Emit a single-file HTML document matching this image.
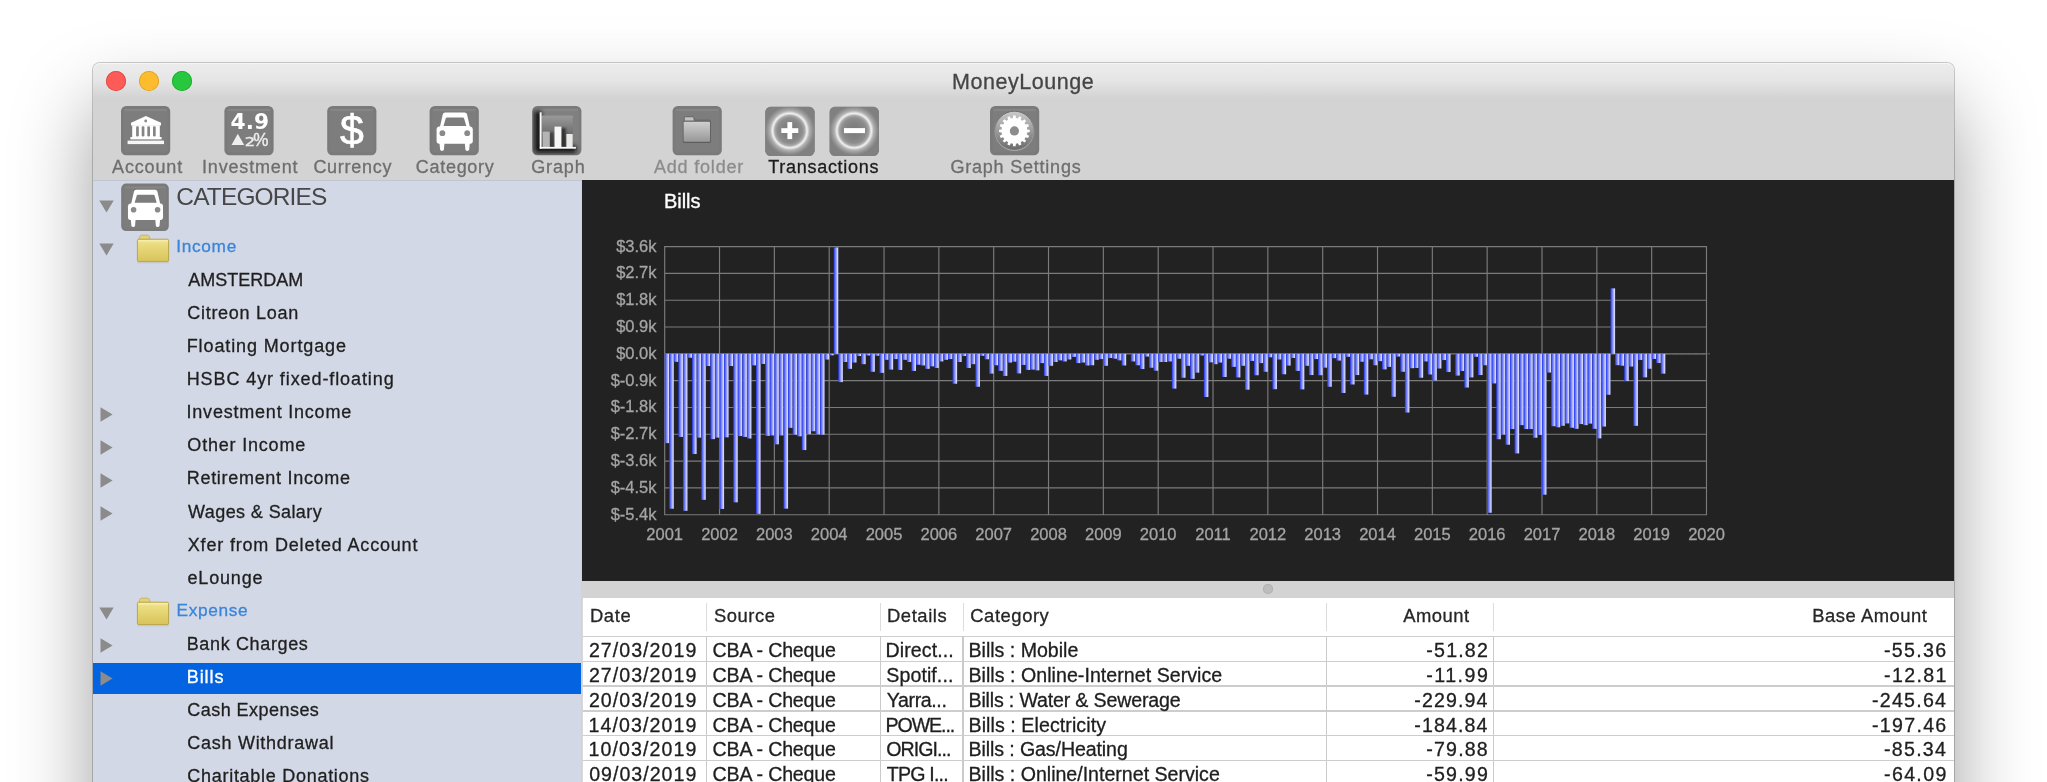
<!DOCTYPE html>
<html lang="en"><head><meta charset="utf-8"><title>MoneyLounge</title>
<style>
html,body{margin:0;padding:0;background:#fff;}
body{width:2047px;height:782px;overflow:hidden;position:relative;font-family:"Liberation Sans",sans-serif;}
.t{position:absolute;white-space:nowrap;-webkit-text-stroke:.3px currentColor;}
.abs{position:absolute;}
#root{position:absolute;left:0;top:0;width:2047px;height:782px;overflow:hidden;will-change:transform;}
#win{position:absolute;left:93px;top:63px;width:1861px;height:900px;border-radius:7px 7px 0 0;background:#d3d3d3;
 box-shadow:0 0 0 1px rgba(0,0,0,.2),0 42px 80px 0 rgba(0,0,0,.38);}
#titlebar{position:absolute;left:93px;top:63px;width:1861px;height:117px;border-radius:7px 7px 0 0;
 background:linear-gradient(#ececec 0,#e6e6e6 17px,#d3d3d3 35px,#d3d3d3 100%);box-shadow:inset 0 1px 0 #f6f6f6;}
#sidebar{position:absolute;left:93px;top:181px;width:488px;height:610px;background:#d2d8e5;}
#chart{position:absolute;left:582px;top:180px;width:1372px;height:400.7px;background:#222222;}
#split{position:absolute;left:581px;top:580.7px;width:1373px;height:17px;background:#d3d3d3;}
#table{position:absolute;left:583px;top:597.5px;width:1371px;height:200px;background:#fff;}
.ic{position:absolute;width:49px;height:49px;border-radius:6px;background:#7e7e7e;box-shadow:inset 0 0 0 2.5px #787878;}
</style></head><body><div id="root">

<div id="win"></div><div id="titlebar"></div>
<div class="abs" style="left:106px;top:71px;width:20px;height:20px;border-radius:50%;background:#fc5b57;box-shadow:inset 0 0 0 .8px #e0443e;"></div>
<div class="abs" style="left:139px;top:71px;width:20px;height:20px;border-radius:50%;background:#fdbc2e;box-shadow:inset 0 0 0 .8px #dea123;"></div>
<div class="abs" style="left:172px;top:71px;width:20px;height:20px;border-radius:50%;background:#27c840;box-shadow:inset 0 0 0 .8px #1aab29;"></div>
<div class="t" style="left:952.04px;top:69.35px;font-size:21.50px;line-height:26px;color:#454545;letter-spacing:0.544px;">MoneyLounge</div>
<svg class="abs" style="left:120px;top:105px" width="54" height="54" viewBox="0 0 54 54"><defs></defs><g transform="translate(1.00 1.00) scale(1.0000)"><rect x="0" y="0" width="49.2" height="49.2" rx="5.2" fill="#7a7a7a"/><rect x="2.6" y="2.6" width="44.0" height="44.0" rx="3" fill="#7d7d7d"/><rect x="3.2" y="3" width="42.8" height="2" rx="1" fill="#8a8a8a" opacity=".7"/><path d="M24.9 9.9L40 16.8V19.6H10V16.8Z" fill="#ffffff"/><circle cx="24.7" cy="15" r="1.45" fill="#8a8a8a"/><rect x="11.2" y="19.2" width="27.6" height="12" fill="#ffffff"/><rect x="15.1" y="20.3" width="2.7" height="10.2" rx="1.2" fill="#858585"/><rect x="20.7" y="20.3" width="2.7" height="10.2" rx="1.2" fill="#858585"/><rect x="26.3" y="20.3" width="2.7" height="10.2" rx="1.2" fill="#858585"/><rect x="32.0" y="20.3" width="2.7" height="10.2" rx="1.2" fill="#858585"/><rect x="9.4" y="31" width="31.2" height="2.4" fill="#ffffff"/><rect x="6.6" y="34.6" width="36.4" height="3.5" fill="#ffffff" opacity=".93"/></g></svg>
<svg class="abs" style="left:223px;top:105px" width="54" height="54" viewBox="0 0 54 54"><defs></defs><g transform="translate(1.40 1.00) scale(1.0000)"><rect x="0" y="0" width="49.2" height="49.2" rx="5.2" fill="#7a7a7a"/><rect x="2.6" y="2.6" width="44.0" height="44.0" rx="3" fill="#7d7d7d"/><rect x="3.2" y="3" width="42.8" height="2" rx="1" fill="#8a8a8a" opacity=".7"/><text x="25.4" y="22.9" font-family="'DejaVu Sans','Liberation Sans',sans-serif" font-weight="bold" font-size="21.5" text-anchor="middle" fill="#ffffff" textLength="38.5" lengthAdjust="spacingAndGlyphs">4.9</text><path d="M13.4 27.8L19.8 38.9H7.1Z" fill="#eeeeee"/><text x="20.3" y="39.7" font-family="'DejaVu Sans','Liberation Sans',sans-serif" font-size="11.5" fill="#ececec" stroke="#ececec" stroke-width=".4" textLength="10.4" lengthAdjust="spacingAndGlyphs">2</text><text x="28.8" y="39.9" font-family="'Liberation Sans',sans-serif" font-size="18" fill="#ececec" stroke="#ececec" stroke-width=".4" textLength="15.2" lengthAdjust="spacingAndGlyphs">%</text></g></svg>
<svg class="abs" style="left:326px;top:105px" width="54" height="54" viewBox="0 0 54 54"><defs></defs><g transform="translate(1.20 1.00) scale(1.0000)"><rect x="0" y="0" width="49.2" height="49.2" rx="5.2" fill="#7a7a7a"/><rect x="2.6" y="2.6" width="44.0" height="44.0" rx="3" fill="#7d7d7d"/><rect x="3.2" y="3" width="42.8" height="2" rx="1" fill="#8a8a8a" opacity=".7"/><text x="24.8" y="39.3" font-family="'Liberation Sans',sans-serif" font-size="42.8" text-anchor="middle" fill="#ffffff" stroke="#ffffff" stroke-width="0.7" stroke-linejoin="round">$</text></g></svg>
<svg class="abs" style="left:428px;top:105px" width="54" height="54" viewBox="0 0 54 54"><defs></defs><g transform="translate(1.60 1.00) scale(1.0000)"><rect x="0" y="0" width="49.2" height="49.2" rx="5.2" fill="#7a7a7a"/><rect x="2.6" y="2.6" width="44.0" height="44.0" rx="3" fill="#7d7d7d"/><rect x="3.2" y="3" width="42.8" height="2" rx="1" fill="#8a8a8a" opacity=".7"/><path fill-rule="evenodd" d="M15.6 6.4H35Q36.9 6.4 37.4 8.2L40.4 21.5H10.2L13.2 8.2Q13.7 6.4 15.6 6.4ZM17.3 11.5Q16.4 11.5 16.1 12.4L13.9 20H36.7L34.5 12.4Q34.2 11.5 33.3 11.5Z" fill="#ffffff"/><path d="M9.6 20.6H41Q43.2 20.9 43.2 23.6V35Q43.2 37.7 40.6 37.7H9.6Q7 37.7 7 35V23.6Q7 20.9 9.6 20.6Z" fill="#ffffff"/><path d="M9.9 37H14.9L14.3 43.6Q14 45 12.4 45Q10.8 45 10.5 43.6Z" fill="#ffffff"/><path d="M35.2 37H40.2L39.6 43.6Q39.3 45 37.7 45Q36.1 45 35.8 43.6Z" fill="#ffffff"/><circle cx="12.8" cy="27.2" r="2.9" fill="#8a8a8a"/><circle cx="37.6" cy="27.2" r="2.9" fill="#8a8a8a"/></g></svg>
<svg class="abs" style="left:531px;top:105px" width="54" height="54" viewBox="0 0 54 54"><defs><linearGradient id="gpl" x1="0" y1="0" x2="0" y2="1"><stop offset="0" stop-color="#9a9a9a"/><stop offset="1" stop-color="#4e4e4e"/></linearGradient><filter id="gbl" x="-50%" y="-50%" width="200%" height="200%"><feGaussianBlur stdDeviation="2.2"/></filter><filter id="gb2" x="-50%" y="-50%" width="200%" height="200%"><feGaussianBlur stdDeviation="1.1"/></filter><clipPath id="gcl"><rect x="0" y="0" width="49.2" height="49.2" rx="5.2"/></clipPath></defs><g transform="translate(1.20 1.00) scale(1.0000)"><rect x="0" y="0" width="49.2" height="49.2" rx="5.2" fill="#7a7a7a"/><rect x="2.6" y="2.6" width="44.0" height="44.0" rx="3" fill="#808080"/><rect x="3.2" y="3" width="42.8" height="2" rx="1" fill="#8a8a8a" opacity=".7"/><g clip-path="url(#gcl)"><path d="M2.5 5V46.5H44V40H9V5Z" fill="#0c0c0c" filter="url(#gbl)"/><rect x="9.2" y="9.6" width="31.5" height="31.6" fill="url(#gpl)"/><rect x="17" y="26.5" width="4.5" height="14.5" fill="#333" filter="url(#gb2)" opacity=".8"/><rect x="28.6" y="22" width="5" height="19" fill="#2c2c2c" filter="url(#gb2)" opacity=".85"/><rect x="10.4" y="25.6" width="7.2" height="15.4" fill="#b4b4b4"/><rect x="22.3" y="20.6" width="6.9" height="20.4" fill="#f6f6f6"/><rect x="34.2" y="28" width="6.3" height="13" fill="#e9e9e6"/><rect x="7.5" y="6.3" width="1.9" height="36.4" fill="#fbfbfb"/><rect x="7.5" y="40.9" width="36.2" height="1.8" fill="#fbfbfb"/></g></g></svg>
<svg class="abs" style="left:671px;top:105px" width="54" height="54" viewBox="0 0 54 54"><defs><linearGradient id="fg" x1="0" y1="0" x2="0" y2="1"><stop offset="0" stop-color="#cfcfcf"/><stop offset="1" stop-color="#979797"/></linearGradient></defs><g transform="translate(1.60 1.00) scale(1.0000)"><rect x="0" y="0" width="49.2" height="49.2" rx="5.2" fill="#7a7a7a"/><rect x="2.6" y="2.6" width="44.0" height="44.0" rx="3" fill="#7d7d7d"/><rect x="3.2" y="3" width="42.8" height="2" rx="1" fill="#8a8a8a" opacity=".7"/><path d="M11 12.3Q11 10.2 13 10.2H20Q21.6 10.2 22 11.8L22.4 13.4H36.6Q38.2 13.4 38.2 15V17H11Z" fill="#6a6a6a"/><path d="M12.2 11.2H20.6L21.2 14.5H12.2Z" fill="#c2c2c2"/><rect x="10.2" y="15.2" width="28" height="21.8" rx="1.2" fill="#5e5e5e"/><rect x="11" y="15.8" width="26.4" height="20" rx=".8" fill="url(#fg)"/></g></svg>
<svg class="abs" style="left:764px;top:105px" width="54" height="54" viewBox="0 0 54 54"><defs><radialGradient id="pmg" gradientUnits="userSpaceOnUse" cx="24.5" cy="23.9" r="25"><stop offset="0" stop-color="#7b7b7b"/><stop offset="0.3" stop-color="#828282"/><stop offset="0.5" stop-color="#8e8e8e"/><stop offset="0.6" stop-color="#a8a8a8"/><stop offset="0.66" stop-color="#dcdcdc"/><stop offset="0.69" stop-color="#f2f2f2"/><stop offset="0.72" stop-color="#dcdcdc"/><stop offset="0.79" stop-color="#b0b0b0"/><stop offset="0.92" stop-color="#8e8e8e"/><stop offset="1" stop-color="#808080"/></radialGradient><clipPath id="pcl"><path d="M4.4 0H44.8L49.2 4.4V44.8L44.8 49.2H4.4L0 44.8V4.4Z"/></clipPath></defs><g transform="translate(1.30 1.70) scale(1.0000)"><rect x="0" y="0" width="49.2" height="49.2" rx="5.2" fill="#7a7a7a"/><rect x="2.6" y="2.6" width="44.0" height="44.0" rx="3" fill="#7d7d7d"/><rect x="3.2" y="3" width="42.8" height="2" rx="1" fill="#8a8a8a" opacity=".7"/><g clip-path="url(#pcl)"><rect x="0" y="0" width="49.2" height="49.2" fill="#7c7c7c"/><circle cx="24.5" cy="23.9" r="34" fill="url(#pmg)"/></g><rect x="16" y="21.5" width="17" height="4.8" fill="#fff"/><rect x="22.1" y="15.4" width="4.8" height="17" fill="#fff"/></g></svg>
<svg class="abs" style="left:828px;top:105px" width="54" height="54" viewBox="0 0 54 54"><defs><radialGradient id="pmg2" gradientUnits="userSpaceOnUse" cx="24.5" cy="23.9" r="25"><stop offset="0" stop-color="#7b7b7b"/><stop offset="0.3" stop-color="#828282"/><stop offset="0.5" stop-color="#8e8e8e"/><stop offset="0.6" stop-color="#a8a8a8"/><stop offset="0.66" stop-color="#dcdcdc"/><stop offset="0.69" stop-color="#f2f2f2"/><stop offset="0.72" stop-color="#dcdcdc"/><stop offset="0.79" stop-color="#b0b0b0"/><stop offset="0.92" stop-color="#8e8e8e"/><stop offset="1" stop-color="#808080"/></radialGradient><clipPath id="pcl2"><path d="M4.4 0H44.8L49.2 4.4V44.8L44.8 49.2H4.4L0 44.8V4.4Z"/></clipPath></defs><g transform="translate(1.60 1.70) scale(1.0000)"><rect x="0" y="0" width="49.2" height="49.2" rx="5.2" fill="#7a7a7a"/><rect x="2.6" y="2.6" width="44.0" height="44.0" rx="3" fill="#7d7d7d"/><rect x="3.2" y="3" width="42.8" height="2" rx="1" fill="#8a8a8a" opacity=".7"/><g clip-path="url(#pcl2)"><rect x="0" y="0" width="49.2" height="49.2" fill="#7c7c7c"/><circle cx="24.5" cy="23.9" r="34" fill="url(#pmg2)"/></g><rect x="14.4" y="21.4" width="21" height="5" fill="#fff"/></g></svg>
<svg class="abs" style="left:989px;top:105px" width="54" height="54" viewBox="0 0 54 54"><defs><linearGradient id="grg" x1="0" y1="0" x2="0" y2="1"><stop offset="0" stop-color="#cacaca"/><stop offset="0.45" stop-color="#a0a0a0"/><stop offset="1" stop-color="#6a6a6a"/></linearGradient><linearGradient id="grr" x1="0" y1="0" x2="0" y2="1"><stop offset="0" stop-color="#666"/><stop offset="1" stop-color="#b8b8b8"/></linearGradient><filter id="grb" x="-20%" y="-20%" width="140%" height="140%"><feGaussianBlur stdDeviation=".65"/></filter></defs><g transform="translate(1.00 1.00) scale(1.0000)"><rect x="0" y="0" width="49.2" height="49.2" rx="5.2" fill="#7a7a7a"/><rect x="2.6" y="2.6" width="44.0" height="44.0" rx="3" fill="#7d7d7d"/><rect x="3.2" y="3" width="42.8" height="2" rx="1" fill="#8a8a8a" opacity=".7"/><circle cx="24.4" cy="24.8" r="19.6" fill="url(#grg)" stroke="url(#grr)" stroke-width="0.9"/><path d="M23.19 9.55L25.61 9.55L25.92 12.09L27.90 12.48L29.16 10.25L31.39 11.18L30.70 13.64L32.39 14.77L34.40 13.19L36.11 14.90L34.53 16.91L35.66 18.60L38.12 17.91L39.05 20.14L36.82 21.40L37.21 23.38L39.75 23.69L39.75 26.11L37.21 26.42L36.82 28.40L39.05 29.66L38.12 31.89L35.66 31.20L34.53 32.89L36.11 34.90L34.40 36.61L32.39 35.03L30.70 36.16L31.39 38.62L29.16 39.55L27.90 37.32L25.92 37.71L25.61 40.25L23.19 40.25L22.88 37.71L20.90 37.32L19.64 39.55L17.41 38.62L18.10 36.16L16.41 35.03L14.40 36.61L12.69 34.90L14.27 32.89L13.14 31.20L10.68 31.89L9.75 29.66L11.98 28.40L11.59 26.42L9.05 26.11L9.05 23.69L11.59 23.38L11.98 21.40L9.75 20.14L10.68 17.91L13.14 18.60L14.27 16.91L12.69 14.90L14.40 13.19L16.41 14.77L18.10 13.64L17.41 11.18L19.64 10.25L20.90 12.48L22.88 12.09Z" fill="#fff" filter="url(#grb)"/><circle cx="24.4" cy="24.9" r="4.6" fill="#8c8c8c"/></g></svg>
<div class="t" style="left:112.06px;top:155.96px;font-size:18.00px;line-height:22px;color:#6e6e6e;letter-spacing:0.854px;">Account</div>
<div class="t" style="left:202.04px;top:155.96px;font-size:18.00px;line-height:22px;color:#6e6e6e;letter-spacing:0.828px;">Investment</div>
<div class="t" style="left:313.39px;top:155.96px;font-size:18.00px;line-height:22px;color:#6e6e6e;letter-spacing:0.732px;">Currency</div>
<div class="t" style="left:415.69px;top:155.96px;font-size:18.00px;line-height:22px;color:#6e6e6e;letter-spacing:0.730px;">Category</div>
<div class="t" style="left:531.29px;top:155.96px;font-size:18.00px;line-height:22px;color:#6e6e6e;letter-spacing:0.836px;">Graph</div>
<div class="t" style="left:653.96px;top:155.96px;font-size:18.00px;line-height:22px;color:#8c8c8c;letter-spacing:0.808px;">Add folder</div>
<div class="t" style="left:768.20px;top:156.46px;font-size:18.00px;line-height:22px;color:#1c1c1c;letter-spacing:0.725px;">Transactions</div>
<div class="t" style="left:950.39px;top:156.46px;font-size:18.00px;line-height:22px;color:#6e6e6e;letter-spacing:0.791px;">Graph Settings</div>
<div id="sidebar"></div>
<div class="abs" style="left:93px;top:180px;width:489px;height:1px;background:#c0c5d1;"></div>
<div class="abs" style="left:93px;top:662.6px;width:488px;height:31.1px;background:#0463e1;"></div>
<svg class="abs" style="left:98.5px;top:200.0px" width="15" height="13" viewBox="0 0 15 13"><path d="M0.3 0.5H14.7L7.5 12.6Z" fill="#8b8b8b"/></svg>
<svg class="abs" style="left:98.5px;top:242.7px" width="15" height="13" viewBox="0 0 15 13"><path d="M0.3 0.5H14.7L7.5 12.6Z" fill="#8b8b8b"/></svg>
<svg class="abs" style="left:98.5px;top:606.5px" width="15" height="13" viewBox="0 0 15 13"><path d="M0.3 0.5H14.7L7.5 12.6Z" fill="#8b8b8b"/></svg>
<svg class="abs" style="left:99.7px;top:406.5px" width="13" height="15" viewBox="0 0 13 15"><path d="M0.5 0.3V14.7L12.6 7.5Z" fill="#8b8b8b"/></svg>
<svg class="abs" style="left:99.7px;top:439.6px" width="13" height="15" viewBox="0 0 13 15"><path d="M0.5 0.3V14.7L12.6 7.5Z" fill="#8b8b8b"/></svg>
<svg class="abs" style="left:99.7px;top:472.7px" width="13" height="15" viewBox="0 0 13 15"><path d="M0.5 0.3V14.7L12.6 7.5Z" fill="#8b8b8b"/></svg>
<svg class="abs" style="left:99.7px;top:505.7px" width="13" height="15" viewBox="0 0 13 15"><path d="M0.5 0.3V14.7L12.6 7.5Z" fill="#8b8b8b"/></svg>
<svg class="abs" style="left:99.7px;top:638.0px" width="13" height="15" viewBox="0 0 13 15"><path d="M0.5 0.3V14.7L12.6 7.5Z" fill="#8b8b8b"/></svg>
<svg class="abs" style="left:99.7px;top:671.0px" width="13" height="15" viewBox="0 0 13 15"><path d="M0.5 0.3V14.7L12.6 7.5Z" fill="#8c8c8c"/></svg>
<svg class="abs" style="left:120px;top:182px" width="52" height="52" viewBox="0 0 52 52"><defs></defs><g transform="translate(1.20 1.50) scale(0.9675)"><rect x="0" y="0" width="49.2" height="49.2" rx="5.2" fill="#7a7a7a"/><rect x="2.6" y="2.6" width="44.0" height="44.0" rx="3" fill="#7d7d7d"/><rect x="3.2" y="3" width="42.8" height="2" rx="1" fill="#8a8a8a" opacity=".7"/><path fill-rule="evenodd" d="M15.6 6.4H35Q36.9 6.4 37.4 8.2L40.4 21.5H10.2L13.2 8.2Q13.7 6.4 15.6 6.4ZM17.3 11.5Q16.4 11.5 16.1 12.4L13.9 20H36.7L34.5 12.4Q34.2 11.5 33.3 11.5Z" fill="#ffffff"/><path d="M9.6 20.6H41Q43.2 20.9 43.2 23.6V35Q43.2 37.7 40.6 37.7H9.6Q7 37.7 7 35V23.6Q7 20.9 9.6 20.6Z" fill="#ffffff"/><path d="M9.9 37H14.9L14.3 43.6Q14 45 12.4 45Q10.8 45 10.5 43.6Z" fill="#ffffff"/><path d="M35.2 37H40.2L39.6 43.6Q39.3 45 37.7 45Q36.1 45 35.8 43.6Z" fill="#ffffff"/><circle cx="12.8" cy="27.2" r="2.9" fill="#8a8a8a"/><circle cx="37.6" cy="27.2" r="2.9" fill="#8a8a8a"/></g></svg>
<svg class="abs" style="left:136.2px;top:234.4px" width="34" height="30" viewBox="0 0 34 30"><defs><linearGradient id="yf234" x1="0" y1="0" x2="0" y2="1"><stop offset="0" stop-color="#f3e694"/><stop offset="0.25" stop-color="#eadb7e"/><stop offset="1" stop-color="#d7c35a"/></linearGradient></defs><rect x="1.2" y="27.4" width="31.8" height="2" fill="#c6c9d2" opacity=".8"/><path d="M3.2 5.6Q3.2 1.2 5.6 1.2H11.6Q13.8 1.2 13.8 5.6Z" fill="#e3d27a" stroke="#bfab4e" stroke-width=".8"/><rect x="1.4" y="5.2" width="31.2" height="22.4" rx="1.4" fill="url(#yf234)" stroke="#b9a548" stroke-width="1"/><rect x="2.4" y="6.2" width="29.2" height="1.3" fill="#f8efb4" opacity=".9"/></svg>
<svg class="abs" style="left:136.2px;top:597.4px" width="34" height="30" viewBox="0 0 34 30"><defs><linearGradient id="yf597" x1="0" y1="0" x2="0" y2="1"><stop offset="0" stop-color="#f3e694"/><stop offset="0.25" stop-color="#eadb7e"/><stop offset="1" stop-color="#d7c35a"/></linearGradient></defs><rect x="1.2" y="27.4" width="31.8" height="2" fill="#c6c9d2" opacity=".8"/><path d="M3.2 5.6Q3.2 1.2 5.6 1.2H11.6Q13.8 1.2 13.8 5.6Z" fill="#e3d27a" stroke="#bfab4e" stroke-width=".8"/><rect x="1.4" y="5.2" width="31.2" height="22.4" rx="1.4" fill="url(#yf597)" stroke="#b9a548" stroke-width="1"/><rect x="2.4" y="6.2" width="29.2" height="1.3" fill="#f8efb4" opacity=".9"/></svg>
<div class="t" style="left:176.36px;top:181.91px;font-size:24.50px;line-height:29px;color:#474747;letter-spacing:-0.873px;-webkit-text-stroke:0;">CATEGORIES</div>
<div class="t" style="left:176.30px;top:236.30px;font-size:17.30px;line-height:21px;color:#3a85da;letter-spacing:0.666px;">Income</div>
<div class="t" style="left:176.58px;top:600.10px;font-size:17.30px;line-height:21px;color:#3a85da;letter-spacing:0.627px;">Expense</div>
<div class="t" style="left:188.16px;top:269.06px;font-size:18.00px;line-height:22px;color:#1f1f1f;letter-spacing:0.013px;">AMSTERDAM</div>
<div class="t" style="left:187.29px;top:302.13px;font-size:18.00px;line-height:22px;color:#1f1f1f;letter-spacing:0.710px;">Citreon Loan</div>
<div class="t" style="left:186.72px;top:335.20px;font-size:18.00px;line-height:22px;color:#1f1f1f;letter-spacing:0.887px;">Floating Mortgage</div>
<div class="t" style="left:186.72px;top:368.27px;font-size:18.00px;line-height:22px;color:#1f1f1f;letter-spacing:0.903px;">HSBC 4yr fixed-floating</div>
<div class="t" style="left:186.54px;top:401.34px;font-size:18.00px;line-height:22px;color:#1f1f1f;letter-spacing:0.787px;">Investment Income</div>
<div class="t" style="left:187.35px;top:434.41px;font-size:18.00px;line-height:22px;color:#1f1f1f;letter-spacing:0.800px;">Other Income</div>
<div class="t" style="left:186.72px;top:467.48px;font-size:18.00px;line-height:22px;color:#1f1f1f;letter-spacing:0.701px;">Retirement Income</div>
<div class="t" style="left:188.12px;top:500.55px;font-size:18.00px;line-height:22px;color:#1f1f1f;letter-spacing:0.395px;">Wages &amp; Salary</div>
<div class="t" style="left:187.80px;top:533.62px;font-size:18.00px;line-height:22px;color:#1f1f1f;letter-spacing:0.814px;">Xfer from Deleted Account</div>
<div class="t" style="left:187.44px;top:566.69px;font-size:18.00px;line-height:22px;color:#1f1f1f;letter-spacing:0.848px;">eLounge</div>
<div class="t" style="left:186.72px;top:632.83px;font-size:18.00px;line-height:22px;color:#1f1f1f;letter-spacing:0.642px;">Bank Charges</div>
<div class="t" style="left:186.72px;top:665.90px;font-size:18.00px;line-height:22px;color:#fff;letter-spacing:0.931px;-webkit-text-stroke:.35px #fff;">Bills</div>
<div class="t" style="left:187.29px;top:698.97px;font-size:18.00px;line-height:22px;color:#1f1f1f;letter-spacing:0.458px;">Cash Expenses</div>
<div class="t" style="left:187.29px;top:732.04px;font-size:18.00px;line-height:22px;color:#1f1f1f;letter-spacing:0.726px;">Cash Withdrawal</div>
<div class="t" style="left:187.29px;top:765.11px;font-size:18.00px;line-height:22px;color:#1f1f1f;letter-spacing:0.719px;">Charitable Donations</div>
<div id="chart"></div>
<svg class="abs" style="left:582px;top:180px" width="1372" height="401" viewBox="582 180 1372 401" font-family="'Liberation Sans',sans-serif">
<defs><linearGradient id="bg" x1="0" y1="0" x2="1" y2="0"><stop offset="0" stop-color="#2a3df2"/><stop offset="0.12" stop-color="#3a4cf6"/><stop offset="0.85" stop-color="#d6d9ff"/><stop offset="1" stop-color="#b9bce8"/></linearGradient></defs>
<text x="663.9" y="208.3" font-size="20" fill="#fff" stroke="#fff" stroke-width="0.35" textLength="36.6">Bills</text>
<path d="M664.70 246.10V515.20M719.53 246.10V515.20M774.36 246.10V515.20M829.19 246.10V515.20M884.03 246.10V515.20M938.86 246.10V515.20M993.69 246.10V515.20M1048.52 246.10V515.20M1103.35 246.10V515.20M1158.18 246.10V515.20M1213.02 246.10V515.20M1267.85 246.10V515.20M1322.68 246.10V515.20M1377.51 246.10V515.20M1432.34 246.10V515.20M1487.17 246.10V515.20M1542.01 246.10V515.20M1596.84 246.10V515.20M1651.67 246.10V515.20M1706.50 246.10V515.20M664.20 246.60H1707.00M664.20 273.41H1707.00M664.20 300.22H1707.00M664.20 327.03H1707.00M664.20 353.84H1707.00M664.20 380.65H1707.00M664.20 407.46H1707.00M664.20 434.27H1707.00M664.20 461.08H1707.00M664.20 487.89H1707.00M664.20 514.70H1707.00" stroke="#7b7b7b" stroke-width="1.15" fill="none"/>
<path d="M1665.4 353.84H1710" stroke="#666" stroke-width="1" stroke-dasharray="5 2" fill="none"/>
<rect x="664.70" y="353.84" width="4.57" height="89.30" fill="url(#bg)"/>
<rect x="669.27" y="353.84" width="4.57" height="154.90" fill="url(#bg)"/>
<rect x="673.84" y="353.84" width="4.57" height="8.00" fill="url(#bg)"/>
<rect x="678.41" y="353.84" width="4.57" height="83.10" fill="url(#bg)"/>
<rect x="682.98" y="353.84" width="4.57" height="157.00" fill="url(#bg)"/>
<rect x="687.55" y="353.84" width="4.57" height="3.90" fill="url(#bg)"/>
<rect x="692.12" y="353.84" width="4.57" height="100.20" fill="url(#bg)"/>
<rect x="696.69" y="353.84" width="4.57" height="83.80" fill="url(#bg)"/>
<rect x="701.25" y="353.84" width="4.57" height="146.00" fill="url(#bg)"/>
<rect x="705.82" y="353.84" width="4.57" height="12.20" fill="url(#bg)"/>
<rect x="710.39" y="353.84" width="4.57" height="85.30" fill="url(#bg)"/>
<rect x="714.96" y="353.84" width="4.57" height="83.80" fill="url(#bg)"/>
<rect x="719.53" y="353.84" width="4.57" height="155.10" fill="url(#bg)"/>
<rect x="724.10" y="353.84" width="4.57" height="83.50" fill="url(#bg)"/>
<rect x="728.67" y="353.84" width="4.57" height="12.20" fill="url(#bg)"/>
<rect x="733.24" y="353.84" width="4.57" height="148.50" fill="url(#bg)"/>
<rect x="737.81" y="353.84" width="4.57" height="82.20" fill="url(#bg)"/>
<rect x="742.38" y="353.84" width="4.57" height="83.10" fill="url(#bg)"/>
<rect x="746.95" y="353.84" width="4.57" height="84.70" fill="url(#bg)"/>
<rect x="751.52" y="353.84" width="4.57" height="11.50" fill="url(#bg)"/>
<rect x="756.09" y="353.84" width="4.57" height="160.00" fill="url(#bg)"/>
<rect x="760.66" y="353.84" width="4.57" height="10.10" fill="url(#bg)"/>
<rect x="765.22" y="353.84" width="4.57" height="82.00" fill="url(#bg)"/>
<rect x="769.79" y="353.84" width="4.57" height="81.60" fill="url(#bg)"/>
<rect x="774.36" y="353.84" width="4.57" height="90.50" fill="url(#bg)"/>
<rect x="778.93" y="353.84" width="4.57" height="81.60" fill="url(#bg)"/>
<rect x="783.50" y="353.84" width="4.57" height="154.80" fill="url(#bg)"/>
<rect x="788.07" y="353.84" width="4.57" height="74.00" fill="url(#bg)"/>
<rect x="792.64" y="353.84" width="4.57" height="80.80" fill="url(#bg)"/>
<rect x="797.21" y="353.84" width="4.57" height="82.50" fill="url(#bg)"/>
<rect x="801.78" y="353.84" width="4.57" height="96.20" fill="url(#bg)"/>
<rect x="806.35" y="353.84" width="4.57" height="80.20" fill="url(#bg)"/>
<rect x="810.92" y="353.84" width="4.57" height="77.40" fill="url(#bg)"/>
<rect x="815.49" y="353.84" width="4.57" height="80.40" fill="url(#bg)"/>
<rect x="820.06" y="353.84" width="4.57" height="80.80" fill="url(#bg)"/>
<rect x="824.63" y="353.84" width="4.57" height="5.70" fill="url(#bg)"/>
<rect x="829.19" y="353.84" width="4.57" height="1.50" fill="url(#bg)"/>
<rect x="833.76" y="247.44" width="4.57" height="106.40" fill="url(#bg)"/>
<rect x="838.33" y="353.84" width="4.57" height="28.26" fill="url(#bg)"/>
<rect x="842.90" y="353.84" width="4.57" height="8.15" fill="url(#bg)"/>
<rect x="847.47" y="353.84" width="4.57" height="15.00" fill="url(#bg)"/>
<rect x="852.04" y="353.84" width="4.57" height="8.70" fill="url(#bg)"/>
<rect x="856.61" y="353.84" width="4.57" height="2.17" fill="url(#bg)"/>
<rect x="861.18" y="353.84" width="4.57" height="10.33" fill="url(#bg)"/>
<rect x="865.75" y="353.84" width="4.57" height="1.63" fill="url(#bg)"/>
<rect x="870.32" y="353.84" width="4.57" height="17.93" fill="url(#bg)"/>
<rect x="874.89" y="353.84" width="4.57" height="1.85" fill="url(#bg)"/>
<rect x="879.46" y="353.84" width="4.57" height="19.02" fill="url(#bg)"/>
<rect x="884.03" y="353.84" width="4.57" height="5.98" fill="url(#bg)"/>
<rect x="888.60" y="353.84" width="4.57" height="15.76" fill="url(#bg)"/>
<rect x="893.16" y="353.84" width="4.57" height="5.22" fill="url(#bg)"/>
<rect x="897.73" y="353.84" width="4.57" height="16.09" fill="url(#bg)"/>
<rect x="902.30" y="353.84" width="4.57" height="5.98" fill="url(#bg)"/>
<rect x="906.87" y="353.84" width="4.57" height="8.15" fill="url(#bg)"/>
<rect x="911.44" y="353.84" width="4.57" height="17.07" fill="url(#bg)"/>
<rect x="916.01" y="353.84" width="4.57" height="10.87" fill="url(#bg)"/>
<rect x="920.58" y="353.84" width="4.57" height="11.63" fill="url(#bg)"/>
<rect x="925.15" y="353.84" width="4.57" height="15.00" fill="url(#bg)"/>
<rect x="929.72" y="353.84" width="4.57" height="12.50" fill="url(#bg)"/>
<rect x="934.29" y="353.84" width="4.57" height="14.13" fill="url(#bg)"/>
<rect x="938.86" y="353.84" width="4.57" height="7.61" fill="url(#bg)"/>
<rect x="943.43" y="353.84" width="4.57" height="5.98" fill="url(#bg)"/>
<rect x="948.00" y="353.84" width="4.57" height="5.22" fill="url(#bg)"/>
<rect x="952.57" y="353.84" width="4.57" height="29.89" fill="url(#bg)"/>
<rect x="957.14" y="353.84" width="4.57" height="8.15" fill="url(#bg)"/>
<rect x="961.70" y="353.84" width="4.57" height="2.17" fill="url(#bg)"/>
<rect x="966.27" y="353.84" width="4.57" height="14.13" fill="url(#bg)"/>
<rect x="970.84" y="353.84" width="4.57" height="10.33" fill="url(#bg)"/>
<rect x="975.41" y="353.84" width="4.57" height="32.93" fill="url(#bg)"/>
<rect x="979.98" y="353.84" width="4.57" height="1.96" fill="url(#bg)"/>
<rect x="984.55" y="353.84" width="4.57" height="5.43" fill="url(#bg)"/>
<rect x="989.12" y="353.84" width="4.57" height="19.78" fill="url(#bg)"/>
<rect x="993.69" y="353.84" width="4.57" height="11.41" fill="url(#bg)"/>
<rect x="998.26" y="353.84" width="4.57" height="17.07" fill="url(#bg)"/>
<rect x="1002.83" y="353.84" width="4.57" height="22.07" fill="url(#bg)"/>
<rect x="1007.40" y="353.84" width="4.57" height="8.70" fill="url(#bg)"/>
<rect x="1011.97" y="353.84" width="4.57" height="7.83" fill="url(#bg)"/>
<rect x="1016.54" y="353.84" width="4.57" height="19.57" fill="url(#bg)"/>
<rect x="1021.11" y="353.84" width="4.57" height="11.09" fill="url(#bg)"/>
<rect x="1025.67" y="353.84" width="4.57" height="16.09" fill="url(#bg)"/>
<rect x="1030.24" y="353.84" width="4.57" height="15.76" fill="url(#bg)"/>
<rect x="1034.81" y="353.84" width="4.57" height="16.52" fill="url(#bg)"/>
<rect x="1039.38" y="353.84" width="4.57" height="9.24" fill="url(#bg)"/>
<rect x="1043.95" y="353.84" width="4.57" height="22.07" fill="url(#bg)"/>
<rect x="1048.52" y="353.84" width="4.57" height="11.96" fill="url(#bg)"/>
<rect x="1053.09" y="353.84" width="4.57" height="8.15" fill="url(#bg)"/>
<rect x="1057.66" y="353.84" width="4.57" height="6.52" fill="url(#bg)"/>
<rect x="1062.23" y="353.84" width="4.57" height="7.61" fill="url(#bg)"/>
<rect x="1066.80" y="353.84" width="4.57" height="5.65" fill="url(#bg)"/>
<rect x="1071.37" y="353.84" width="4.57" height="3.04" fill="url(#bg)"/>
<rect x="1075.94" y="353.84" width="4.57" height="9.24" fill="url(#bg)"/>
<rect x="1080.51" y="353.84" width="4.57" height="8.70" fill="url(#bg)"/>
<rect x="1085.08" y="353.84" width="4.57" height="11.63" fill="url(#bg)"/>
<rect x="1089.64" y="353.84" width="4.57" height="11.41" fill="url(#bg)"/>
<rect x="1094.21" y="353.84" width="4.57" height="5.98" fill="url(#bg)"/>
<rect x="1098.78" y="353.84" width="4.57" height="5.22" fill="url(#bg)"/>
<rect x="1103.35" y="353.84" width="4.57" height="11.96" fill="url(#bg)"/>
<rect x="1107.92" y="353.84" width="4.57" height="4.13" fill="url(#bg)"/>
<rect x="1112.49" y="353.84" width="4.57" height="4.89" fill="url(#bg)"/>
<rect x="1117.06" y="353.84" width="4.57" height="6.52" fill="url(#bg)"/>
<rect x="1121.63" y="353.84" width="4.57" height="11.63" fill="url(#bg)"/>
<rect x="1130.77" y="353.84" width="4.57" height="7.61" fill="url(#bg)"/>
<rect x="1135.34" y="353.84" width="4.57" height="11.41" fill="url(#bg)"/>
<rect x="1139.91" y="353.84" width="4.57" height="15.22" fill="url(#bg)"/>
<rect x="1144.48" y="353.84" width="4.57" height="2.72" fill="url(#bg)"/>
<rect x="1149.05" y="353.84" width="4.57" height="13.91" fill="url(#bg)"/>
<rect x="1153.61" y="353.84" width="4.57" height="16.85" fill="url(#bg)"/>
<rect x="1158.18" y="353.84" width="4.57" height="8.15" fill="url(#bg)"/>
<rect x="1162.75" y="353.84" width="4.57" height="8.15" fill="url(#bg)"/>
<rect x="1167.32" y="353.84" width="4.57" height="7.61" fill="url(#bg)"/>
<rect x="1171.89" y="353.84" width="4.57" height="34.78" fill="url(#bg)"/>
<rect x="1176.46" y="353.84" width="4.57" height="4.89" fill="url(#bg)"/>
<rect x="1181.03" y="353.84" width="4.57" height="23.91" fill="url(#bg)"/>
<rect x="1185.60" y="353.84" width="4.57" height="11.96" fill="url(#bg)"/>
<rect x="1190.17" y="353.84" width="4.57" height="25.00" fill="url(#bg)"/>
<rect x="1194.74" y="353.84" width="4.57" height="18.80" fill="url(#bg)"/>
<rect x="1199.31" y="353.84" width="4.57" height="1.63" fill="url(#bg)"/>
<rect x="1203.88" y="353.84" width="4.57" height="43.15" fill="url(#bg)"/>
<rect x="1208.45" y="353.84" width="4.57" height="8.48" fill="url(#bg)"/>
<rect x="1213.02" y="353.84" width="4.57" height="10.33" fill="url(#bg)"/>
<rect x="1217.59" y="353.84" width="4.57" height="8.70" fill="url(#bg)"/>
<rect x="1222.15" y="353.84" width="4.57" height="23.15" fill="url(#bg)"/>
<rect x="1226.72" y="353.84" width="4.57" height="4.89" fill="url(#bg)"/>
<rect x="1231.29" y="353.84" width="4.57" height="13.04" fill="url(#bg)"/>
<rect x="1235.86" y="353.84" width="4.57" height="23.59" fill="url(#bg)"/>
<rect x="1240.43" y="353.84" width="4.57" height="11.96" fill="url(#bg)"/>
<rect x="1245.00" y="353.84" width="4.57" height="35.87" fill="url(#bg)"/>
<rect x="1249.57" y="353.84" width="4.57" height="7.07" fill="url(#bg)"/>
<rect x="1254.14" y="353.84" width="4.57" height="21.41" fill="url(#bg)"/>
<rect x="1258.71" y="353.84" width="4.57" height="9.24" fill="url(#bg)"/>
<rect x="1263.28" y="353.84" width="4.57" height="17.93" fill="url(#bg)"/>
<rect x="1267.85" y="353.84" width="4.57" height="3.48" fill="url(#bg)"/>
<rect x="1272.42" y="353.84" width="4.57" height="35.33" fill="url(#bg)"/>
<rect x="1276.99" y="353.84" width="4.57" height="5.65" fill="url(#bg)"/>
<rect x="1281.56" y="353.84" width="4.57" height="20.43" fill="url(#bg)"/>
<rect x="1286.12" y="353.84" width="4.57" height="11.74" fill="url(#bg)"/>
<rect x="1290.69" y="353.84" width="4.57" height="4.13" fill="url(#bg)"/>
<rect x="1295.26" y="353.84" width="4.57" height="17.07" fill="url(#bg)"/>
<rect x="1299.83" y="353.84" width="4.57" height="35.54" fill="url(#bg)"/>
<rect x="1304.40" y="353.84" width="4.57" height="11.96" fill="url(#bg)"/>
<rect x="1308.97" y="353.84" width="4.57" height="21.20" fill="url(#bg)"/>
<rect x="1313.54" y="353.84" width="4.57" height="5.22" fill="url(#bg)"/>
<rect x="1318.11" y="353.84" width="4.57" height="21.41" fill="url(#bg)"/>
<rect x="1322.68" y="353.84" width="4.57" height="13.80" fill="url(#bg)"/>
<rect x="1327.25" y="353.84" width="4.57" height="32.93" fill="url(#bg)"/>
<rect x="1331.82" y="353.84" width="4.57" height="4.35" fill="url(#bg)"/>
<rect x="1336.39" y="353.84" width="4.57" height="6.74" fill="url(#bg)"/>
<rect x="1340.96" y="353.84" width="4.57" height="39.13" fill="url(#bg)"/>
<rect x="1345.53" y="353.84" width="4.57" height="2.93" fill="url(#bg)"/>
<rect x="1350.09" y="353.84" width="4.57" height="30.65" fill="url(#bg)"/>
<rect x="1354.66" y="353.84" width="4.57" height="21.20" fill="url(#bg)"/>
<rect x="1359.23" y="353.84" width="4.57" height="7.93" fill="url(#bg)"/>
<rect x="1363.80" y="353.84" width="4.57" height="40.76" fill="url(#bg)"/>
<rect x="1368.37" y="353.84" width="4.57" height="5.43" fill="url(#bg)"/>
<rect x="1372.94" y="353.84" width="4.57" height="11.41" fill="url(#bg)"/>
<rect x="1377.51" y="353.84" width="4.57" height="7.28" fill="url(#bg)"/>
<rect x="1382.08" y="353.84" width="4.57" height="15.54" fill="url(#bg)"/>
<rect x="1386.65" y="353.84" width="4.57" height="13.04" fill="url(#bg)"/>
<rect x="1391.22" y="353.84" width="4.57" height="42.93" fill="url(#bg)"/>
<rect x="1395.79" y="353.84" width="4.57" height="2.72" fill="url(#bg)"/>
<rect x="1400.36" y="353.84" width="4.57" height="17.93" fill="url(#bg)"/>
<rect x="1404.93" y="353.84" width="4.57" height="58.70" fill="url(#bg)"/>
<rect x="1409.50" y="353.84" width="4.57" height="14.35" fill="url(#bg)"/>
<rect x="1414.06" y="353.84" width="4.57" height="14.13" fill="url(#bg)"/>
<rect x="1418.63" y="353.84" width="4.57" height="23.91" fill="url(#bg)"/>
<rect x="1423.20" y="353.84" width="4.57" height="7.61" fill="url(#bg)"/>
<rect x="1427.77" y="353.84" width="4.57" height="20.65" fill="url(#bg)"/>
<rect x="1432.34" y="353.84" width="4.57" height="26.63" fill="url(#bg)"/>
<rect x="1436.91" y="353.84" width="4.57" height="14.67" fill="url(#bg)"/>
<rect x="1441.48" y="353.84" width="4.57" height="6.20" fill="url(#bg)"/>
<rect x="1446.05" y="353.84" width="4.57" height="18.15" fill="url(#bg)"/>
<rect x="1455.19" y="353.84" width="4.57" height="21.74" fill="url(#bg)"/>
<rect x="1459.76" y="353.84" width="4.57" height="17.17" fill="url(#bg)"/>
<rect x="1464.33" y="353.84" width="4.57" height="33.70" fill="url(#bg)"/>
<rect x="1468.90" y="353.84" width="4.57" height="23.59" fill="url(#bg)"/>
<rect x="1473.47" y="353.84" width="4.57" height="2.93" fill="url(#bg)"/>
<rect x="1478.04" y="353.84" width="4.57" height="21.20" fill="url(#bg)"/>
<rect x="1482.60" y="353.84" width="4.57" height="11.41" fill="url(#bg)"/>
<rect x="1487.17" y="353.84" width="4.57" height="158.91" fill="url(#bg)"/>
<rect x="1491.74" y="353.84" width="4.57" height="29.57" fill="url(#bg)"/>
<rect x="1496.31" y="353.84" width="4.57" height="85.43" fill="url(#bg)"/>
<rect x="1500.88" y="353.84" width="4.57" height="80.65" fill="url(#bg)"/>
<rect x="1505.45" y="353.84" width="4.57" height="90.87" fill="url(#bg)"/>
<rect x="1510.02" y="353.84" width="4.57" height="75.22" fill="url(#bg)"/>
<rect x="1514.59" y="353.84" width="4.57" height="99.57" fill="url(#bg)"/>
<rect x="1519.16" y="353.84" width="4.57" height="71.30" fill="url(#bg)"/>
<rect x="1523.73" y="353.84" width="4.57" height="75.22" fill="url(#bg)"/>
<rect x="1528.30" y="353.84" width="4.57" height="75.22" fill="url(#bg)"/>
<rect x="1532.87" y="353.84" width="4.57" height="83.91" fill="url(#bg)"/>
<rect x="1537.44" y="353.84" width="4.57" height="81.09" fill="url(#bg)"/>
<rect x="1542.01" y="353.84" width="4.57" height="140.87" fill="url(#bg)"/>
<rect x="1546.57" y="353.84" width="4.57" height="18.70" fill="url(#bg)"/>
<rect x="1551.14" y="353.84" width="4.57" height="72.39" fill="url(#bg)"/>
<rect x="1555.71" y="353.84" width="4.57" height="73.48" fill="url(#bg)"/>
<rect x="1560.28" y="353.84" width="4.57" height="71.96" fill="url(#bg)"/>
<rect x="1564.85" y="353.84" width="4.57" height="69.57" fill="url(#bg)"/>
<rect x="1569.42" y="353.84" width="4.57" height="73.91" fill="url(#bg)"/>
<rect x="1573.99" y="353.84" width="4.57" height="75.00" fill="url(#bg)"/>
<rect x="1578.56" y="353.84" width="4.57" height="70.22" fill="url(#bg)"/>
<rect x="1583.13" y="353.84" width="4.57" height="71.30" fill="url(#bg)"/>
<rect x="1587.70" y="353.84" width="4.57" height="69.78" fill="url(#bg)"/>
<rect x="1592.27" y="353.84" width="4.57" height="75.00" fill="url(#bg)"/>
<rect x="1596.84" y="353.84" width="4.57" height="84.50" fill="url(#bg)"/>
<rect x="1601.41" y="353.84" width="4.57" height="72.70" fill="url(#bg)"/>
<rect x="1605.98" y="353.84" width="4.57" height="40.90" fill="url(#bg)"/>
<rect x="1610.54" y="288.34" width="4.57" height="65.50" fill="url(#bg)"/>
<rect x="1615.11" y="353.84" width="4.57" height="11.30" fill="url(#bg)"/>
<rect x="1619.68" y="353.84" width="4.57" height="11.90" fill="url(#bg)"/>
<rect x="1624.25" y="353.84" width="4.57" height="27.20" fill="url(#bg)"/>
<rect x="1628.82" y="353.84" width="4.57" height="12.70" fill="url(#bg)"/>
<rect x="1633.39" y="353.84" width="4.57" height="72.00" fill="url(#bg)"/>
<rect x="1637.96" y="353.84" width="4.57" height="6.10" fill="url(#bg)"/>
<rect x="1642.53" y="353.84" width="4.57" height="23.50" fill="url(#bg)"/>
<rect x="1647.10" y="353.84" width="4.57" height="14.90" fill="url(#bg)"/>
<rect x="1651.67" y="353.84" width="4.57" height="5.10" fill="url(#bg)"/>
<rect x="1656.24" y="353.84" width="4.57" height="9.20" fill="url(#bg)"/>
<rect x="1660.81" y="353.84" width="4.57" height="19.80" fill="url(#bg)"/>
<text x="656.5" y="251.60" font-size="16.5" fill="#a4a4a4" stroke="#a4a4a4" stroke-width=".3" text-anchor="end">$3.6k</text>
<text x="656.5" y="278.41" font-size="16.5" fill="#a4a4a4" stroke="#a4a4a4" stroke-width=".3" text-anchor="end">$2.7k</text>
<text x="656.5" y="305.22" font-size="16.5" fill="#a4a4a4" stroke="#a4a4a4" stroke-width=".3" text-anchor="end">$1.8k</text>
<text x="656.5" y="332.03" font-size="16.5" fill="#a4a4a4" stroke="#a4a4a4" stroke-width=".3" text-anchor="end">$0.9k</text>
<text x="656.5" y="358.84" font-size="16.5" fill="#a4a4a4" stroke="#a4a4a4" stroke-width=".3" text-anchor="end">$0.0k</text>
<text x="656.5" y="385.65" font-size="16.5" fill="#a4a4a4" stroke="#a4a4a4" stroke-width=".3" text-anchor="end">$-0.9k</text>
<text x="656.5" y="412.46" font-size="16.5" fill="#a4a4a4" stroke="#a4a4a4" stroke-width=".3" text-anchor="end">$-1.8k</text>
<text x="656.5" y="439.27" font-size="16.5" fill="#a4a4a4" stroke="#a4a4a4" stroke-width=".3" text-anchor="end">$-2.7k</text>
<text x="656.5" y="466.08" font-size="16.5" fill="#a4a4a4" stroke="#a4a4a4" stroke-width=".3" text-anchor="end">$-3.6k</text>
<text x="656.5" y="492.89" font-size="16.5" fill="#a4a4a4" stroke="#a4a4a4" stroke-width=".3" text-anchor="end">$-4.5k</text>
<text x="656.5" y="519.70" font-size="16.5" fill="#a4a4a4" stroke="#a4a4a4" stroke-width=".3" text-anchor="end">$-5.4k</text>
<text x="664.70" y="539.8" font-size="16.5" fill="#a4a4a4" stroke="#a4a4a4" stroke-width=".3" text-anchor="middle">2001</text>
<text x="719.53" y="539.8" font-size="16.5" fill="#a4a4a4" stroke="#a4a4a4" stroke-width=".3" text-anchor="middle">2002</text>
<text x="774.36" y="539.8" font-size="16.5" fill="#a4a4a4" stroke="#a4a4a4" stroke-width=".3" text-anchor="middle">2003</text>
<text x="829.19" y="539.8" font-size="16.5" fill="#a4a4a4" stroke="#a4a4a4" stroke-width=".3" text-anchor="middle">2004</text>
<text x="884.03" y="539.8" font-size="16.5" fill="#a4a4a4" stroke="#a4a4a4" stroke-width=".3" text-anchor="middle">2005</text>
<text x="938.86" y="539.8" font-size="16.5" fill="#a4a4a4" stroke="#a4a4a4" stroke-width=".3" text-anchor="middle">2006</text>
<text x="993.69" y="539.8" font-size="16.5" fill="#a4a4a4" stroke="#a4a4a4" stroke-width=".3" text-anchor="middle">2007</text>
<text x="1048.52" y="539.8" font-size="16.5" fill="#a4a4a4" stroke="#a4a4a4" stroke-width=".3" text-anchor="middle">2008</text>
<text x="1103.35" y="539.8" font-size="16.5" fill="#a4a4a4" stroke="#a4a4a4" stroke-width=".3" text-anchor="middle">2009</text>
<text x="1158.18" y="539.8" font-size="16.5" fill="#a4a4a4" stroke="#a4a4a4" stroke-width=".3" text-anchor="middle">2010</text>
<text x="1213.02" y="539.8" font-size="16.5" fill="#a4a4a4" stroke="#a4a4a4" stroke-width=".3" text-anchor="middle">2011</text>
<text x="1267.85" y="539.8" font-size="16.5" fill="#a4a4a4" stroke="#a4a4a4" stroke-width=".3" text-anchor="middle">2012</text>
<text x="1322.68" y="539.8" font-size="16.5" fill="#a4a4a4" stroke="#a4a4a4" stroke-width=".3" text-anchor="middle">2013</text>
<text x="1377.51" y="539.8" font-size="16.5" fill="#a4a4a4" stroke="#a4a4a4" stroke-width=".3" text-anchor="middle">2014</text>
<text x="1432.34" y="539.8" font-size="16.5" fill="#a4a4a4" stroke="#a4a4a4" stroke-width=".3" text-anchor="middle">2015</text>
<text x="1487.17" y="539.8" font-size="16.5" fill="#a4a4a4" stroke="#a4a4a4" stroke-width=".3" text-anchor="middle">2016</text>
<text x="1542.01" y="539.8" font-size="16.5" fill="#a4a4a4" stroke="#a4a4a4" stroke-width=".3" text-anchor="middle">2017</text>
<text x="1596.84" y="539.8" font-size="16.5" fill="#a4a4a4" stroke="#a4a4a4" stroke-width=".3" text-anchor="middle">2018</text>
<text x="1651.67" y="539.8" font-size="16.5" fill="#a4a4a4" stroke="#a4a4a4" stroke-width=".3" text-anchor="middle">2019</text>
<text x="1706.50" y="539.8" font-size="16.5" fill="#a4a4a4" stroke="#a4a4a4" stroke-width=".3" text-anchor="middle">2020</text>
</svg>
<div id="split"></div>
<div class="abs" style="left:1263px;top:583.5px;width:10px;height:10px;border-radius:50%;background:#bdbdbd;box-shadow:inset 0 0 0 1px #b0b0b0;"></div>
<div id="table"></div>
<div class="abs" style="left:582px;top:598px;width:1px;height:190px;background:#d8d8d8;"></div>
<div class="abs" style="left:706.0px;top:603px;width:1.3px;height:28px;background:#dcdcdc;"></div>
<div class="abs" style="left:705.9px;top:636px;width:1.4px;height:150px;background:#cacaca;"></div>
<div class="abs" style="left:879.7px;top:603px;width:1.3px;height:28px;background:#dcdcdc;"></div>
<div class="abs" style="left:879.6px;top:636px;width:1.4px;height:150px;background:#cacaca;"></div>
<div class="abs" style="left:962.5px;top:603px;width:1.3px;height:28px;background:#dcdcdc;"></div>
<div class="abs" style="left:962.4px;top:636px;width:1.4px;height:150px;background:#cacaca;"></div>
<div class="abs" style="left:1326.2px;top:603px;width:1.3px;height:28px;background:#dcdcdc;"></div>
<div class="abs" style="left:1326.1px;top:636px;width:1.4px;height:150px;background:#cacaca;"></div>
<div class="abs" style="left:1493.2px;top:603px;width:1.3px;height:28px;background:#dcdcdc;"></div>
<div class="abs" style="left:1493.1px;top:636px;width:1.4px;height:150px;background:#cacaca;"></div>
<div class="abs" style="left:583px;top:635.8px;width:1371px;height:1.4px;background:#cdcdcd;"></div>
<div class="abs" style="left:583px;top:660.6px;width:1371px;height:1.4px;background:#cdcdcd;"></div>
<div class="abs" style="left:583px;top:685.4px;width:1371px;height:1.4px;background:#cdcdcd;"></div>
<div class="abs" style="left:583px;top:710.2px;width:1371px;height:1.4px;background:#cdcdcd;"></div>
<div class="abs" style="left:583px;top:735.0px;width:1371px;height:1.4px;background:#cdcdcd;"></div>
<div class="abs" style="left:583px;top:759.8px;width:1371px;height:1.4px;background:#cdcdcd;"></div>
<div class="abs" style="left:583px;top:784.6px;width:1371px;height:1.4px;background:#cdcdcd;"></div>
<div class="t" style="left:589.89px;top:604.82px;font-size:18.40px;line-height:22px;color:#262626;letter-spacing:0.653px;">Date</div>
<div class="t" style="left:714.06px;top:604.82px;font-size:18.40px;line-height:22px;color:#262626;letter-spacing:0.510px;">Source</div>
<div class="t" style="left:886.99px;top:604.82px;font-size:18.40px;line-height:22px;color:#262626;letter-spacing:0.588px;">Details</div>
<div class="t" style="left:970.27px;top:604.82px;font-size:18.40px;line-height:22px;color:#262626;letter-spacing:0.558px;">Category</div>
<div class="t" style="left:1403.26px;top:604.82px;font-size:18.40px;line-height:22px;color:#262626;letter-spacing:0.511px;">Amount</div>
<div class="t" style="left:1812.19px;top:604.82px;font-size:18.40px;line-height:22px;color:#262626;letter-spacing:0.539px;">Base Amount</div>
<div class="t" style="left:588.91px;top:638.21px;font-size:19.60px;line-height:24px;color:#1e1e1e;letter-spacing:1.035px;">27/03/2019</div>
<div class="t" style="left:712.60px;top:638.21px;font-size:19.60px;line-height:24px;color:#1e1e1e;letter-spacing:-0.176px;">CBA - Cheque</div>
<div class="t" style="left:885.59px;top:638.21px;font-size:19.60px;line-height:24px;color:#1e1e1e;letter-spacing:0.085px;">Direct...</div>
<div class="t" style="left:968.49px;top:638.21px;font-size:19.60px;line-height:24px;color:#1e1e1e;letter-spacing:-0.010px;">Bills : Mobile</div>
<div class="t" style="left:1426.33px;top:638.21px;font-size:19.60px;line-height:24px;color:#1e1e1e;letter-spacing:1.196px;">-51.82</div>
<div class="t" style="left:1884.03px;top:638.21px;font-size:19.60px;line-height:24px;color:#1e1e1e;letter-spacing:1.331px;">-55.36</div>
<div class="t" style="left:588.91px;top:663.01px;font-size:19.60px;line-height:24px;color:#1e1e1e;letter-spacing:1.035px;">27/03/2019</div>
<div class="t" style="left:712.60px;top:663.01px;font-size:19.60px;line-height:24px;color:#1e1e1e;letter-spacing:-0.176px;">CBA - Cheque</div>
<div class="t" style="left:886.31px;top:663.01px;font-size:19.60px;line-height:24px;color:#1e1e1e;letter-spacing:0.078px;">Spotif...</div>
<div class="t" style="left:968.49px;top:663.01px;font-size:19.60px;line-height:24px;color:#1e1e1e;letter-spacing:0.035px;">Bills : Online-Internet Service</div>
<div class="t" style="left:1426.33px;top:663.01px;font-size:19.60px;line-height:24px;color:#1e1e1e;letter-spacing:1.475px;">-11.99</div>
<div class="t" style="left:1884.03px;top:663.01px;font-size:19.60px;line-height:24px;color:#1e1e1e;letter-spacing:1.350px;">-12.81</div>
<div class="t" style="left:588.91px;top:687.81px;font-size:19.60px;line-height:24px;color:#1e1e1e;letter-spacing:1.035px;">20/03/2019</div>
<div class="t" style="left:712.60px;top:687.81px;font-size:19.60px;line-height:24px;color:#1e1e1e;letter-spacing:-0.176px;">CBA - Cheque</div>
<div class="t" style="left:886.77px;top:687.81px;font-size:19.60px;line-height:24px;color:#1e1e1e;letter-spacing:-0.385px;">Yarra...</div>
<div class="t" style="left:968.49px;top:687.81px;font-size:19.60px;line-height:24px;color:#1e1e1e;letter-spacing:-0.168px;">Bills : Water &amp; Sewerage</div>
<div class="t" style="left:1414.33px;top:687.81px;font-size:19.60px;line-height:24px;color:#1e1e1e;letter-spacing:1.111px;">-229.94</div>
<div class="t" style="left:1872.03px;top:687.81px;font-size:19.60px;line-height:24px;color:#1e1e1e;letter-spacing:1.245px;">-245.64</div>
<div class="t" style="left:588.41px;top:712.61px;font-size:19.60px;line-height:24px;color:#1e1e1e;letter-spacing:1.091px;">14/03/2019</div>
<div class="t" style="left:712.60px;top:712.61px;font-size:19.60px;line-height:24px;color:#1e1e1e;letter-spacing:-0.176px;">CBA - Cheque</div>
<div class="t" style="left:885.59px;top:712.61px;font-size:19.60px;line-height:24px;color:#1e1e1e;letter-spacing:-1.088px;">POWE...</div>
<div class="t" style="left:968.49px;top:712.61px;font-size:19.60px;line-height:24px;color:#1e1e1e;letter-spacing:0.079px;">Bills : Electricity</div>
<div class="t" style="left:1414.33px;top:712.61px;font-size:19.60px;line-height:24px;color:#1e1e1e;letter-spacing:1.111px;">-184.84</div>
<div class="t" style="left:1872.03px;top:712.61px;font-size:19.60px;line-height:24px;color:#1e1e1e;letter-spacing:1.292px;">-197.46</div>
<div class="t" style="left:588.41px;top:737.41px;font-size:19.60px;line-height:24px;color:#1e1e1e;letter-spacing:1.091px;">10/03/2019</div>
<div class="t" style="left:712.60px;top:737.41px;font-size:19.60px;line-height:24px;color:#1e1e1e;letter-spacing:-0.176px;">CBA - Cheque</div>
<div class="t" style="left:886.27px;top:737.41px;font-size:19.60px;line-height:24px;color:#1e1e1e;letter-spacing:-0.965px;">ORIGI...</div>
<div class="t" style="left:968.49px;top:737.41px;font-size:19.60px;line-height:24px;color:#1e1e1e;letter-spacing:-0.103px;">Bills : Gas/Heating</div>
<div class="t" style="left:1426.33px;top:737.41px;font-size:19.60px;line-height:24px;color:#1e1e1e;letter-spacing:1.169px;">-79.88</div>
<div class="t" style="left:1884.03px;top:737.41px;font-size:19.60px;line-height:24px;color:#1e1e1e;letter-spacing:1.274px;">-85.34</div>
<div class="t" style="left:589.13px;top:762.21px;font-size:19.60px;line-height:24px;color:#1e1e1e;letter-spacing:1.011px;">09/03/2019</div>
<div class="t" style="left:712.60px;top:762.21px;font-size:19.60px;line-height:24px;color:#1e1e1e;letter-spacing:-0.176px;">CBA - Cheque</div>
<div class="t" style="left:886.76px;top:762.21px;font-size:19.60px;line-height:24px;color:#1e1e1e;letter-spacing:-0.798px;">TPG I...</div>
<div class="t" style="left:968.49px;top:762.21px;font-size:19.60px;line-height:24px;color:#1e1e1e;letter-spacing:-0.009px;">Bills : Online/Internet Service</div>
<div class="t" style="left:1426.33px;top:762.21px;font-size:19.60px;line-height:24px;color:#1e1e1e;letter-spacing:1.185px;">-59.99</div>
<div class="t" style="left:1884.03px;top:762.21px;font-size:19.60px;line-height:24px;color:#1e1e1e;letter-spacing:1.345px;">-64.09</div>
</div></body></html>
